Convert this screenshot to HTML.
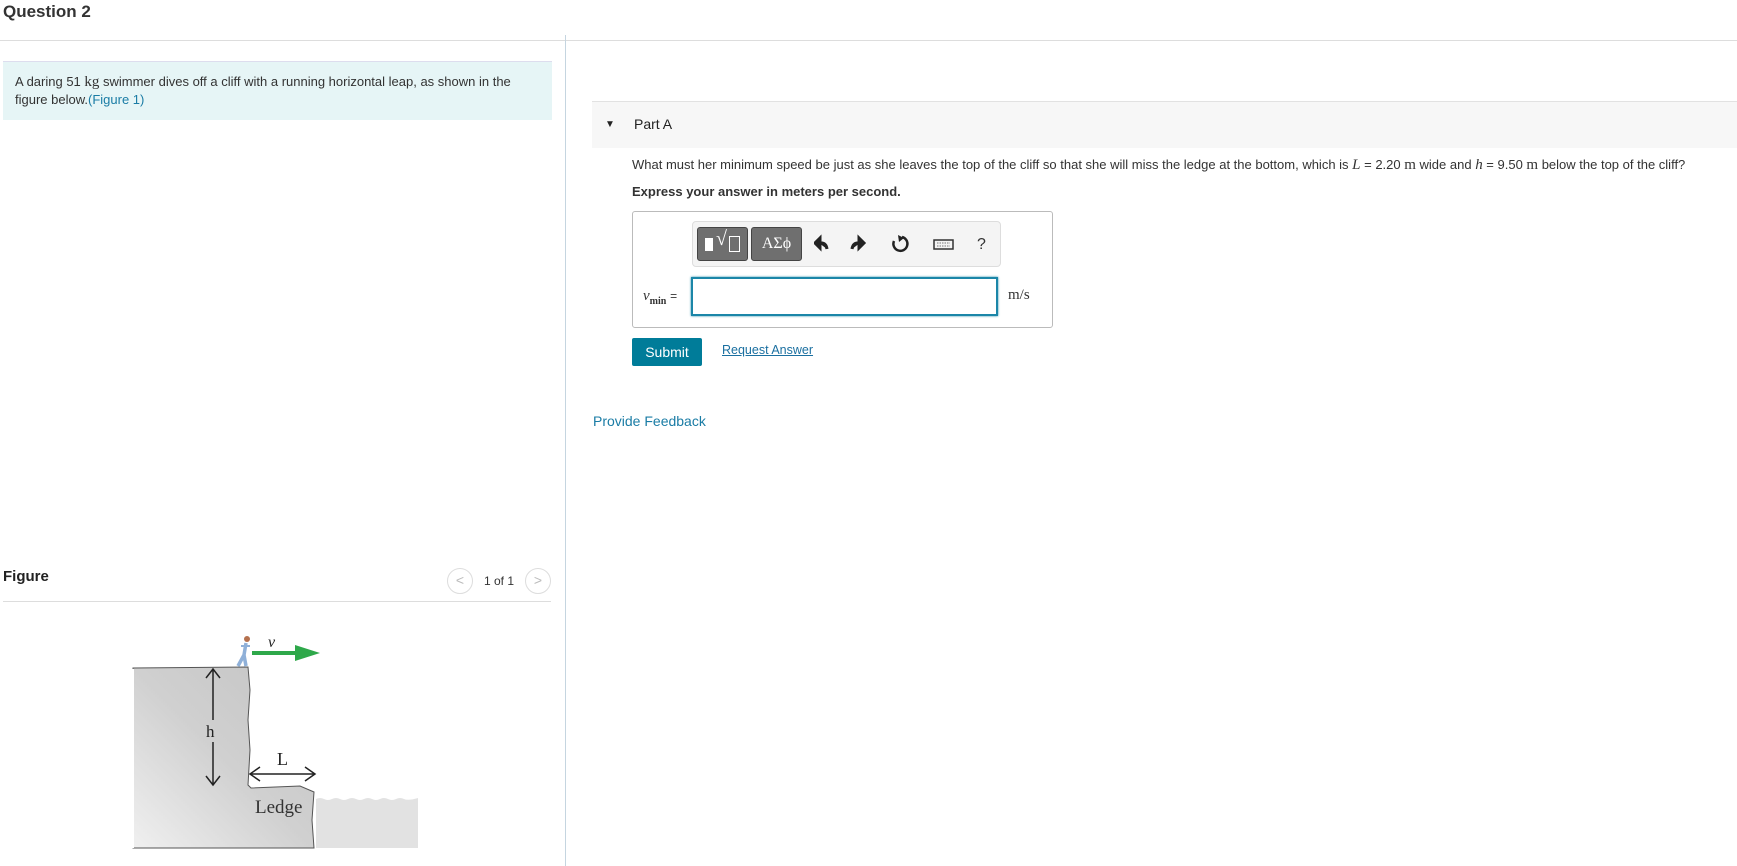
<!DOCTYPE html>
<html><head><meta charset="utf-8"><style>
body{margin:0;width:1737px;height:866px;position:relative;background:#fff;font-family:"Liberation Sans",Arial,sans-serif;color:#333;overflow:hidden}
.a{position:absolute}
.m{font-family:"Liberation Serif",serif}
</style></head><body>
<div class="a" style="left:3px;top:2px;font-size:17px;font-weight:bold;color:#333">Question 2</div>
<div class="a" style="left:0;top:40px;width:1737px;height:1px;background:#ddd"></div>
<div class="a" style="left:565px;top:35px;width:1px;height:831px;background:#c5d5e0"></div>
<div class="a" style="left:3px;top:61px;width:549px;height:58px;background:#e6f5f6;border-top:1px solid #dde"></div>
<div class="a" style="left:15px;top:73px;font-size:13px;line-height:18px;color:#333;width:530px">A daring 51 <span class="m" style="font-size:15px">kg</span> swimmer dives off a cliff with a running horizontal leap, as shown in the<br>figure below.<span style="color:#1a7ca5">(Figure 1)</span></div>

<div class="a" style="left:592px;top:101px;width:1145px;height:46px;background:#f7f7f7;border-top:1px solid #e2e2e2"></div>
<div class="a" style="left:605px;top:119px;font-size:10px;color:#222">▼</div>
<div class="a" style="left:634px;top:116px;font-size:14px;color:#222">Part A</div>
<div class="a" style="left:632px;top:157px;font-size:13px;color:#333;white-space:nowrap">What must her minimum speed be just as she leaves the top of the cliff so that she will miss the ledge at the bottom, which is <i class="m" style="font-size:15px">L</i> = 2.20 <span class="m" style="font-size:15px">m</span> wide and <i class="m" style="font-size:15px">h</i> = 9.50 <span class="m" style="font-size:15px">m</span> below the top of the cliff?</div>
<div class="a" style="left:632px;top:184px;font-size:13px;font-weight:bold;color:#333">Express your answer in meters per second.</div>

<div class="a" style="left:632px;top:211px;width:419px;height:115px;border:1px solid #bbb;border-radius:3px"></div>
<div class="a" style="left:692px;top:221px;width:307px;height:44px;background:#f4f4f4;border:1px solid #ddd;border-radius:4px"></div>
<div class="a" style="left:697px;top:227px;width:49px;height:32px;background:#6f6f6f;border:1px solid #444;border-radius:3px"></div>
<div class="a" style="left:705px;top:238px;width:8px;height:13px;background:#fff"></div>
<div class="a m" style="left:716px;top:228px;font-size:20px;color:#fff">√</div>
<div class="a" style="left:729px;top:236px;width:9px;height:14px;border:1px solid #fff"></div>
<div class="a m" style="left:751px;top:227px;width:49px;height:32px;background:#6f6f6f;border:1px solid #444;border-radius:3px;color:#fff;font-size:16px;text-align:center;line-height:32px">ΑΣϕ</div>
<svg class="a" style="left:814px;top:234px" width="200" height="20" viewBox="0 0 200 20">
<path d="M6 4 L1 9 L6 14 Z M5 9 Q12 8 13 15" fill="#222" stroke="#222" stroke-width="3"/>
<path d="M45 4 L50 9 L45 14 Z M46 9 Q39 8 38 15" fill="#222" stroke="#222" stroke-width="3"/>
<path d="M88 3 A7 7 0 1 1 80 7" fill="none" stroke="#222" stroke-width="2.5"/><path d="M84 1 L90 4 L85 8 Z" fill="#222"/>
<rect x="120" y="6" width="19" height="9" fill="none" stroke="#333" stroke-width="1.5"/><path d="M123 9h13M123 12h13" stroke="#777" stroke-dasharray="1.5 1"/>
<text x="163" y="15" font-size="16" fill="#333" font-family="Liberation Sans">?</text></svg>
<div class="a m" style="left:643px;top:288px;font-size:15px;color:#333"><i>v</i><sub style="font-size:10px;font-weight:bold">min</sub> <span style="font-size:12px;font-family:'Liberation Sans'">=</span></div>
<div class="a" style="left:691px;top:277px;width:303px;height:35px;border:2px solid #1b86a8;box-shadow:0 0 2px #1b86a8"></div>
<div class="a m" style="left:1008px;top:287px;font-size:15px;color:#333">m/s</div>
<div class="a" style="left:632px;top:338px;width:70px;height:28px;background:#007c99;border-radius:2px;color:#fff;font-size:14px;text-align:center;line-height:28px">Submit</div>
<div class="a" style="left:722px;top:343px;font-size:12.5px;color:#1a6fa0;text-decoration:underline">Request Answer</div>
<div class="a" style="left:593px;top:413px;font-size:14px;color:#1a7ca5">Provide Feedback</div>

<div class="a" style="left:3px;top:568px;font-size:15px;font-weight:bold;color:#222">Figure</div>
<div class="a" style="left:3px;top:601px;width:548px;height:1px;background:#ddd"></div>
<div class="a" style="left:447px;top:568px;width:24px;height:24px;border:1px solid #ddd;border-radius:50%;color:#bbb;text-align:center;line-height:23px;font-size:14px">&lt;</div>
<div class="a" style="left:484px;top:574px;font-size:12px;color:#333">1 of 1</div>
<div class="a" style="left:525px;top:568px;width:24px;height:24px;border:1px solid #ddd;border-radius:50%;color:#bbb;text-align:center;line-height:23px;font-size:14px">&gt;</div>

<svg class="a" style="left:120px;top:620px" width="310" height="240" viewBox="0 0 310 240">
<defs><linearGradient id="g" x1="0" y1="1" x2="1" y2="0"><stop offset="0" stop-color="#f0f0f0"/><stop offset=".5" stop-color="#d0d0d0"/><stop offset="1" stop-color="#c4c4c4"/></linearGradient></defs>
<path d="M196 179 Q200 177 204 179 Q208 181 212 179 Q216 177 220 179 Q224 181 228 179 Q232 177 236 179 Q240 181 244 179 Q248 177 252 179 Q256 181 260 179 Q264 177 268 179 Q272 181 276 179 Q280 177 284 179 Q288 181 298 178 V228 H196Z" fill="#e2e2e2"/>
<path d="M13 48 L128 47 L130 70 L128 100 L130 130 L128 165 L131 168 L180 166 L194 172 L192 200 L194 228 H13Z" fill="url(#g)" stroke="#555" stroke-width="1"/>
<path d="M13 49 V228" stroke="#fff" stroke-width="2"/>
<path d="M93 50 V100 M93 122 V165 M86 58 L93 49 L100 58 M86 156 L93 165 L100 156" fill="none" stroke="#222" stroke-width="1.5"/>
<text x="86" y="117" font-size="17" font-family="Liberation Serif" fill="#222">h</text>
<path d="M130 154 H195 M140 147 L130 154 L140 161 M185 147 L195 154 L185 161" fill="none" stroke="#222" stroke-width="1.5"/>
<text x="157" y="145" font-size="18" font-family="Liberation Serif" fill="#222">L</text>
<text x="135" y="193" font-size="19" font-family="Liberation Serif" fill="#333">Ledge</text>
<path d="M132 31 H175 V25 L200 33 L175 41 V35 H132Z" fill="#2ea84a"/>
<text x="148" y="27" font-size="16" font-style="italic" font-family="Liberation Serif" fill="#222">v</text>
<circle cx="127" cy="19" r="3" fill="#b5714e"/>
<path d="M126 23 L124 35 L118 46 M124 35 L126 46" stroke="#8fb0d8" stroke-width="3.5" fill="none"/>
<path d="M121 26 L130 26" stroke="#8fb0d8" stroke-width="2"/>
</svg>
</body></html>
